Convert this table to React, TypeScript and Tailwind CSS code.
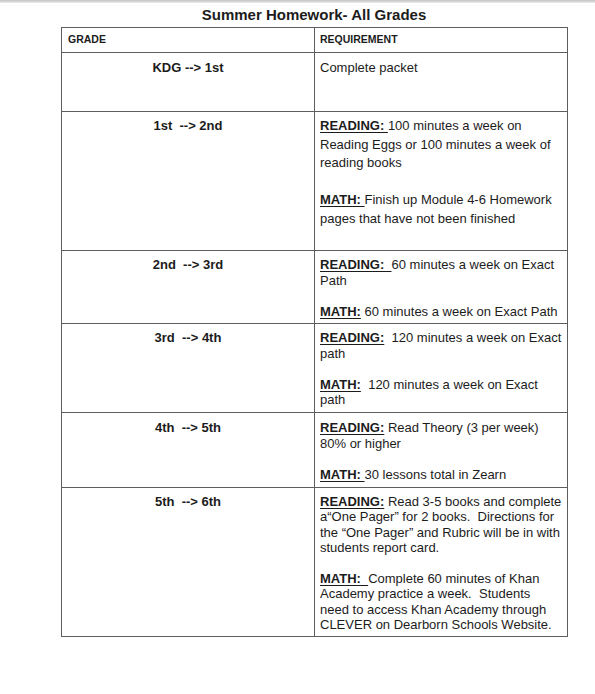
import React from 'react';

type Part = { u?: string; t: string };

const ROWS: { grade: string; h: string; lh: string; pt: string; paras: { label: string; lines: string[] }[] | null }[] = [
  { grade: 'KDG --> 1st', h: 'h-[59px]', lh: 'leading-[15.5px]', pt: 'pt-[7px]', paras: null },
  {
    grade: '1st  --> 2nd',
    h: 'h-[139px]',
    lh: 'leading-[18.5px]',
    pt: 'pt-[5px]',
    paras: [
      { label: 'READING: ', lines: ['100 minutes a week on', 'Reading Eggs or 100 minutes a week of', 'reading books'] },
      { label: 'MATH: ', lines: ['Finish up Module 4-6 Homework', 'pages that have not been finished'] },
    ],
  },
  {
    grade: '2nd  --> 3rd',
    h: 'h-[73px]',
    lh: 'leading-[15.5px]',
    pt: 'pt-[6px]',
    paras: [
      { label: 'READING:  ', lines: ['60 minutes a week on Exact', 'Path'] },
      { label: 'MATH:', lines: [' 60 minutes a week on Exact Path'] },
    ],
  },
  {
    grade: '3rd  --> 4th',
    h: 'h-[89px]',
    lh: 'leading-[15.5px]',
    pt: 'pt-[6px]',
    paras: [
      { label: 'READING:', lines: ['  120 minutes a week on Exact', 'path'] },
      { label: 'MATH:', lines: ['  120 minutes a week on Exact', 'path'] },
    ],
  },
  {
    grade: '4th  --> 5th',
    h: 'h-[75px]',
    lh: 'leading-[15.5px]',
    pt: 'pt-[7px]',
    paras: [
      { label: 'READING:', lines: [' Read Theory (3 per week)', '80% or higher'] },
      { label: 'MATH: ', lines: ['30 lessons total in Zearn'] },
    ],
  },
  {
    grade: '5th  --> 6th',
    h: 'h-[149px]',
    lh: 'leading-[15.4px]',
    pt: 'pt-[6px]',
    paras: [
      {
        label: 'READING:',
        lines: [
          ' Read 3-5 books and complete',
          'a\u201cOne Pager\u201d for 2 books.  Directions for',
          'the \u201cOne Pager\u201d and Rubric will be in with',
          'students report card.',
        ],
      },
      {
        label: 'MATH:  ',
        lines: [
          'Complete 60 minutes of Khan',
          'Academy practice a week.  Students',
          'need to access Khan Academy through',
          'CLEVER on Dearborn Schools Website.',
        ],
      },
    ],
  },
];

function Para({ label, lines }: { label: string; lines: string[] }) {
  return (
    <div className="whitespace-pre">
      {lines.map((l, i) => (
        <div key={i}>
          {i === 0 && <span className="font-bold underline underline-offset-[2px]">{label}</span>}
          {l}
        </div>
      ))}
    </div>
  );
}

export default function App() {
  return (
    <div
      className="min-h-[694px] w-[595px] bg-white text-[#1c1c1c]"
      style={{ fontFamily: '"Liberation Sans", Arial, sans-serif' }}
    >
      <div className="h-[3px] bg-gradient-to-b from-[#c4c4c4] to-[#ececec]" />
      <div className="ml-[61px] w-[506px]">
        <div className="h-[24px] text-center text-[15px] font-bold leading-[24px]">Summer Homework- All Grades</div>
        <table className="w-[506px] table-fixed border-collapse border border-[#5e5e5e]">
          <colgroup>
            <col className="w-[253px]" />
            <col className="w-[253px]" />
          </colgroup>
          <thead>
            <tr className="h-[25px]">
              <th className="border border-[#5e5e5e] px-[6px] text-left align-middle text-[10.5px] font-bold">GRADE</th>
              <th className="border border-[#5e5e5e] px-[5px] text-left align-middle text-[10.5px] font-bold">REQUIREMENT</th>
            </tr>
          </thead>
          <tbody>
            {ROWS.map((r) => (
              <tr key={r.grade} className={r.h}>
                <td className={`border border-[#5e5e5e] px-[6px] text-center align-top text-[13px] font-bold ${r.lh} ${r.pt} whitespace-pre`}>
                  {r.grade}
                </td>
                <td className={`border border-[#5e5e5e] pl-[5px] pr-[4px] align-top text-[13px] ${r.lh} ${r.pt}`}>
                  {r.paras === null ? (
                    'Complete packet'
                  ) : (
                    <div className="flex flex-col">
                      <Para {...r.paras[0]} />
                      <div className="h-[1lh]" />
                      <Para {...r.paras[1]} />
                    </div>
                  )}
                </td>
              </tr>
            ))}
          </tbody>
        </table>
      </div>
    </div>
  );
}
